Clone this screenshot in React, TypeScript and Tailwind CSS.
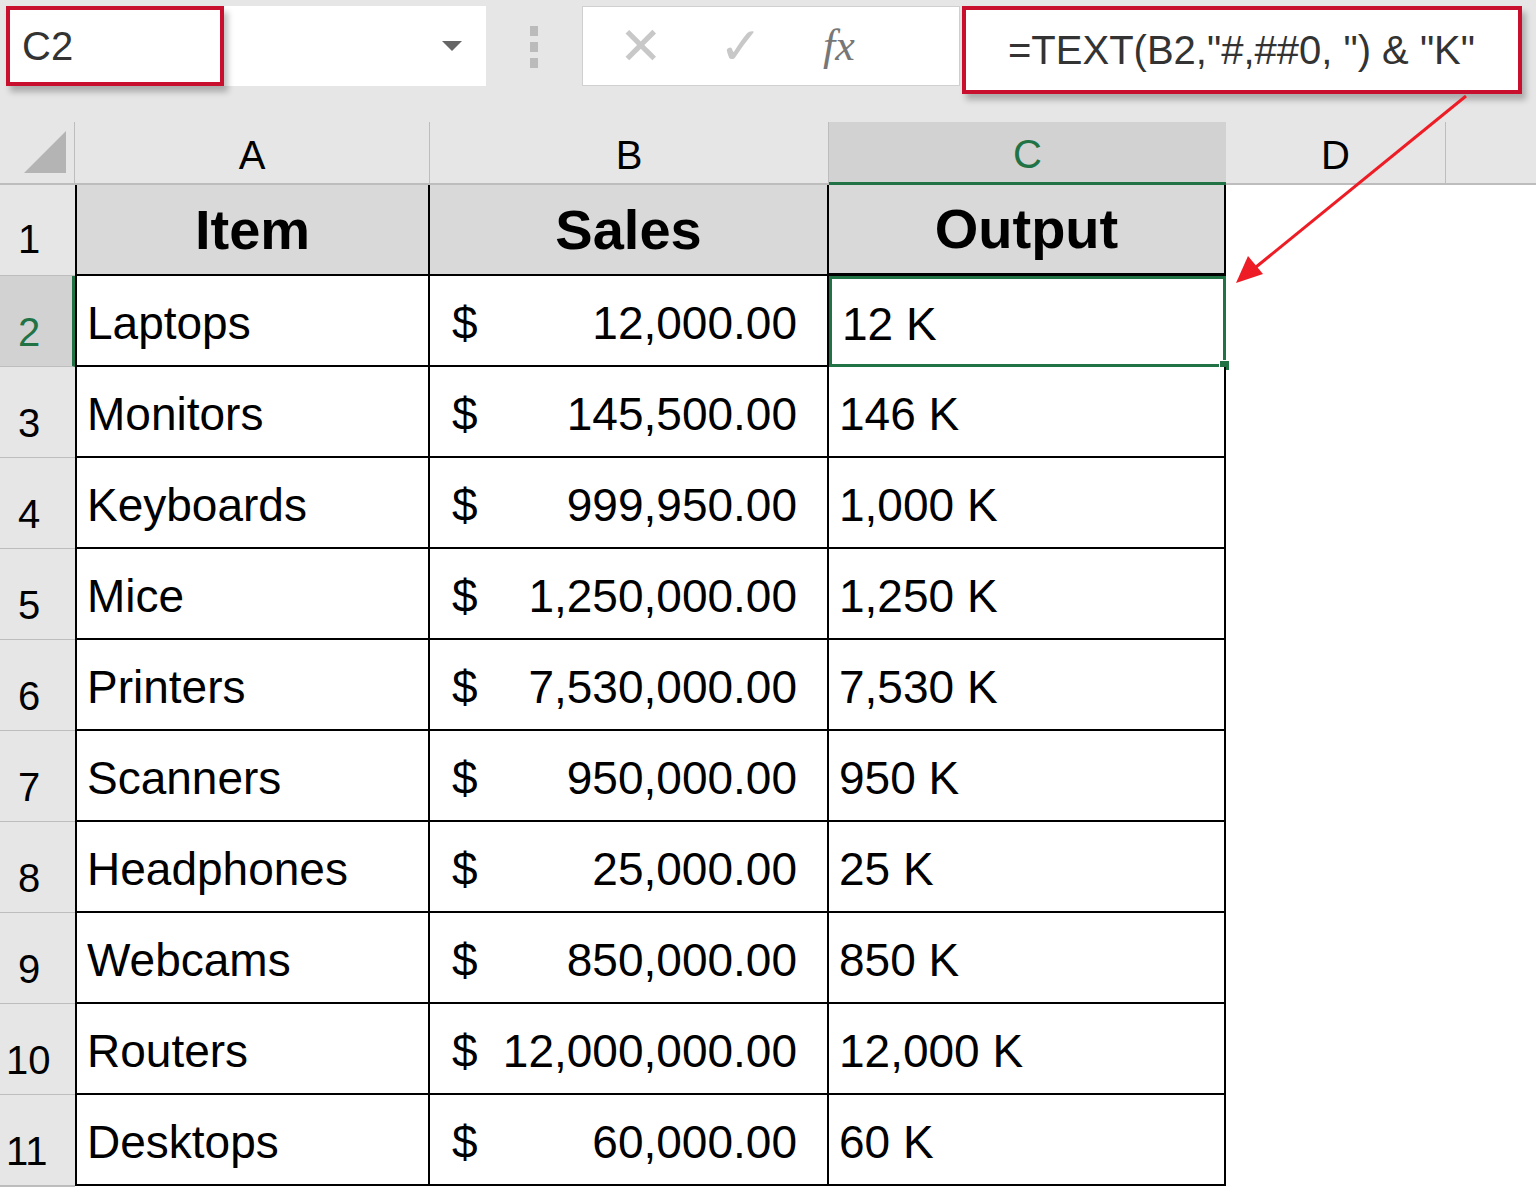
import React from "react"

const rows: [string, string, string][] = [
  ["Laptops", "12,000.00", "12 K"],
  ["Monitors", "145,500.00", "146 K"],
  ["Keyboards", "999,950.00", "1,000 K"],
  ["Mice", "1,250,000.00", "1,250 K"],
  ["Printers", "7,530,000.00", "7,530 K"],
  ["Scanners", "950,000.00", "950 K"],
  ["Headphones", "25,000.00", "25 K"],
  ["Webcams", "850,000.00", "850 K"],
  ["Routers", "12,000,000.00", "12,000 K"],
  ["Desktops", "60,000.00", "60 K"],
]

const font = { fontFamily: '"Liberation Sans", Arial, sans-serif' }

export default function App() {
  return (
    <div className="relative h-[1195px] w-[1536px] overflow-hidden bg-white text-black" style={font}>
      {/* formula bar */}
      <div className="flex h-[122px] items-start bg-[#e6e6e6] pt-[6px]">
        <div className="ml-[6px] flex h-[80px] w-[480px] items-center bg-white">
          <div className="flex h-full w-[218px] items-center border-[4px] border-[#c8102e] pl-[12px] text-[40px] text-[#333] shadow-[4px_6px_6px_rgba(0,0,0,0.25)]">
            C2
          </div>
          <div className="flex-1" />
          <div className="mr-[24px] h-0 w-0 border-x-[10px] border-t-[10px] border-x-transparent border-t-[#666]" />
        </div>
        <div className="mx-[44px] mt-[20px] flex flex-col gap-[6px]">
          <div className="h-[10px] w-[8px] bg-[#bbb]" />
          <div className="h-[10px] w-[8px] bg-[#bbb]" />
          <div className="h-[10px] w-[8px] bg-[#bbb]" />
        </div>
        <div className="flex h-[80px] w-[378px] items-center border border-[#d0d0d0] bg-white">
          <span className="ml-[36px] text-[52px] font-light text-[#c8c8c8]">✕</span>
          <span className="ml-[56px] text-[52px] text-[#c8c8c8]">✓</span>
          <span className="ml-[60px] text-[44px] italic text-[#777]" style={{ fontFamily: '"Liberation Serif", serif' }}>fx</span>
        </div>
        <div className="ml-[2px] flex h-[88px] w-[560px] items-center border-[4px] border-[#c8102e] bg-white pl-[42px] text-[40px] text-[#333] shadow-[4px_6px_6px_rgba(0,0,0,0.25)]">
          =TEXT(B2,"#,##0, ") &amp; "K"
        </div>
      </div>

      {/* grid */}
      <div className="grid grid-cols-[75px_355px_399px_397px_220px_1fr] grid-rows-[63px_repeat(11,91px)_1fr] bg-[#e6e6e6]">
        <div className="relative border-r border-b-2 border-[#bdbdbd] bg-[#e6e6e6]">
          <div className="absolute right-[8px] bottom-[10px] h-0 w-0 border-b-[42px] border-l-[42px] border-l-transparent border-b-[#b4b4b4]" />
        </div>
        {["A", "B"].map((c) => (
          <div key={c} className="flex items-center justify-center border-r border-b-2 border-[#bdbdbd] bg-[#e6e6e6] pt-[4px] text-[40px]">{c}</div>
        ))}
        <div className="flex items-center justify-center border-b-[3px] border-[#217346] bg-[#d2d2d2] pt-[4px] text-[40px] text-[#217346]">C</div>
        <div className="flex items-center justify-center border-r border-b-2 border-[#bdbdbd] bg-[#e6e6e6] pt-[4px] text-[40px]">D</div>
        <div className="border-b-2 border-[#bdbdbd] bg-[#e6e6e6]" />

        {/* row 1 */}
        <div className="flex items-end border-b border-[#bdbdbd] pb-[6px] pl-[18px] text-[40px]">1</div>
        <div className="flex items-center justify-center border-r-2 border-b-2 border-l-2 border-black bg-[#d9d9d9] text-[56px] font-bold">Item</div>
        <div className="flex items-center justify-center border-r-2 border-b-2 border-black bg-[#d9d9d9] text-[56px] font-bold">Sales</div>
        <div className="flex items-center justify-center border-r-2 border-b-[3px] border-black bg-[#d9d9d9] text-[56px] font-bold">Output</div>
        <div className="bg-white" />
        <div className="bg-white" />

        {rows.map(([item, sales, out], i) => {
          const sel = i === 0
          return (
            <React.Fragment key={item}>
              <div className={`flex items-end border-b border-[#bdbdbd] pb-[4px] text-[40px] ${i === 8 || i === 9 ? "pl-[6px]" : "pl-[18px]"} ${sel ? "bg-[#d2d2d2] text-[#217346] border-r-[3px] border-r-[#217346]" : ""}`}>
                {i + 2}
              </div>
              <div className="flex items-center border-r-2 border-b-2 border-l-2 border-black bg-white pt-[6px] pl-[10px] text-[46px]">{item}</div>
              <div className="flex items-center justify-between border-r-2 border-b-2 border-black bg-white pt-[6px] pr-[30px] pl-[22px] text-[46px]">
                <span>$</span>
                <span>{sales}</span>
              </div>
              <div className={`relative flex items-center bg-white pt-[6px] pl-[10px] text-[46px] ${sel ? "border-[3px] border-[#217346]" : "border-r-2 border-b-2 border-black"}`}>
                {out}
                {sel && <div className="absolute -right-[7px] -bottom-[7px] h-[11px] w-[11px] border border-white bg-[#217346]" />}
              </div>
              <div className="bg-white" />
              <div className="bg-white" />
            </React.Fragment>
          )
        })}
        <div className="border-b border-[#bdbdbd]" />
        <div className="col-span-5 bg-white" />
      </div>

      {/* arrow overlay */}
      <svg className="pointer-events-none absolute top-0 left-0" width="1536" height="1195">
        <defs>
          <marker id="ah" markerWidth="10" markerHeight="10" refX="8" refY="5" orient="auto" markerUnits="userSpaceOnUse" viewBox="0 0 10 10">
            <path d="M0 0 L10 5 L0 10 Z" fill="#ee1c25" />
          </marker>
        </defs>
        <line x1="1466" y1="96" x2="1240" y2="280" stroke="#ee1c25" strokeWidth="3" />
        <path d="M1236 283 L1248 256 L1263 274 Z" fill="#ee1c25" />
      </svg>
    </div>
  )
}
